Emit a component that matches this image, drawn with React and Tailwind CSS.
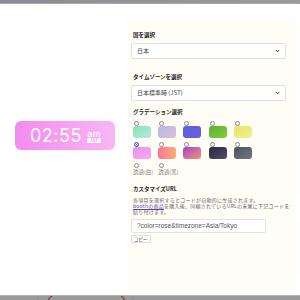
import React, { useState } from 'react';

const gradients = [
  { id: 'mint', cls: 'bg-gradient-to-br from-[#84e2b6] to-[#b6e9de]' },
  { id: 'lavender', cls: 'bg-gradient-to-br from-[#b4b8e6] to-[#dbbfdb]' },
  { id: 'indigo', cls: 'bg-gradient-to-br from-[#5263de] to-[#6c5ed6]' },
  { id: 'green', cls: 'bg-gradient-to-br from-[#58b231] to-[#84cd3e]' },
  { id: 'lemon', cls: 'bg-gradient-to-br from-[#e2e664] to-[#f0f190]' },
  { id: 'rose', cls: 'bg-gradient-to-br from-[#ee8cf0] to-[#f8aaf0]' },
  { id: 'peach', cls: 'bg-gradient-to-r from-[#f8739a] to-[#fdab70]' },
  { id: 'grape', cls: 'bg-gradient-to-br from-[#a63cc6] to-[#f59070]' },
  { id: 'night', cls: 'bg-gradient-to-br from-[#2c2a42] to-[#4f4d68]' },
  { id: 'slate', cls: 'bg-gradient-to-br from-[#4c555e] to-[#6d787e]' },
];

const Radio = ({ checked }) => (
  <span
    className={
      checked
        ? 'block w-[5px] h-[5px] rounded-full bg-[#1a73e8] border border-[#1a73e8] shadow-[inset_0_0_0_1px_#fff]'
        : 'block w-[5px] h-[5px] rounded-full border border-[#8a8a8a] bg-white'
    }
  />
);

const Chevron = () => (
  <svg width="5" height="4" viewBox="0 0 5 4" className="shrink-0">
    <path d="M0.8 1 L2.5 2.8 L4.2 1" fill="none" stroke="#333" strokeWidth="0.9" />
  </svg>
);

const Select = ({ value }) => (
  <div className="flex items-center justify-between w-[155px] h-[16px] px-[5px] bg-white border border-[#e2e2e2] rounded-[2px] shadow-[0_0_1px_rgba(0,0,0,0.08)]">
    <span className="text-[6px] text-[#444] leading-none">{value}</span>
    <Chevron />
  </div>
);

const App = () => {
  const [selected, setSelected] = useState('rose');

  return (
    <div className="w-[300px] h-[300px] overflow-hidden bg-white font-['Noto_Sans_CJK_JP','Noto_Sans',sans-serif]">
      {/* top bar */}
      <div className="h-[4px] bg-gradient-to-r from-[#8c8c95] to-[#9b9b9b] border-b border-[#a8a8a8]" />

      <div className="flex h-[291px]">
        {/* clock preview */}
        <div className="w-[128px] pl-[15px] pt-[117px]">
          <div className="flex items-center w-[100px] h-[29px] pl-[15px] gap-[5px] rounded-[6px] bg-gradient-to-r from-[#f48aef] to-[#f7b6f4]">
            <span className="text-[18px] leading-none font-normal text-white tracking-[0.5px] font-['Inter',sans-serif]">
              02:55
            </span>
            <div className="flex flex-col items-center gap-[1px] pt-[1px]">
              <span className="text-[9px] leading-[7px] font-medium text-white font-['Inter',sans-serif]">am</span>
              <span className="w-[14px] text-center rounded-[1px] bg-white text-[4.5px] leading-[5px] font-bold text-[#f49cf0] font-['Inter',sans-serif]">
                JST
              </span>
            </div>
          </div>
        </div>

        {/* settings panel */}
        <div className="w-[169px] h-[270px] mt-[16px] bg-[#fffdf6] pl-[3px] pt-[12px]">
          <p className="text-[5.5px] leading-[6px] font-bold text-[#222] pl-[2px]">国を選択</p>
          <div className="mt-[5px]">
            <Select value="日本" />
          </div>

          <p className="mt-[15px] text-[5.5px] leading-[6px] font-bold text-[#222] pl-[2px]">タイムゾーンを選択</p>
          <div className="mt-[5px]">
            <Select value="日本標準時 (JST)" />
          </div>

          <p className="mt-[8px] text-[5.5px] leading-[6px] font-bold text-[#222] pl-[2px]">グラデーション選択</p>

          <div className="mt-[6px] pl-[2px] grid grid-cols-5 w-[128px] gap-y-[4px]">
            {gradients.map((g) => (
              <button
                key={g.id}
                onClick={() => setSelected(g.id)}
                className="flex flex-col items-start"
              >
                <span className="pl-[1px]">
                  <Radio checked={selected === g.id} />
                </span>
                <span className={`block w-[18px] h-[12px] rounded-[3px] ${g.cls}`} />
              </button>
            ))}
            {['透過(白)', '透過(黒)'].map((t) => (
              <div key={t} className="flex flex-col items-start">
                <span className="pl-[1px]">
                  <Radio checked={false} />
                </span>
                <span className="text-[5.5px] leading-[8px] text-[#777] whitespace-nowrap">{t}</span>
              </div>
            ))}
          </div>

          <p className="mt-[10px] text-[5.5px] leading-[6px] font-bold text-[#222] pl-[2px]">カスタマイズURL</p>
          <p className="mt-[5px] pl-[2px] text-[5px] leading-[6px] tracking-[0.25px] text-[#666] whitespace-nowrap">
            各項目を選択するとコードが自動的に生成されます。
            <br />
            <span className="text-[#5b3fa0] underline">boothの商品</span>を購入後、同梱されているURLの末尾に下記コードを
            <br />
            貼り付けます。
          </p>

          <div className="mt-[4px] flex items-center w-[135px] h-[14px] pl-[5px] bg-white border border-[#e2e2e2] rounded-[2px]">
            <span className="text-[6.5px] leading-none text-[#555] font-['Liberation_Sans',sans-serif]">
              ?color=rose&amp;timezone=Asia/Tokyo
            </span>
          </div>
          <button className="mt-[2px] flex items-center h-[8px] px-[2px] bg-white border border-[#dcdcdc] rounded-[1px] text-[4.5px] leading-none text-[#555]">
            コピー
          </button>
        </div>
      </div>

      {/* bottom bar */}
      <div className="h-[5px] bg-[#9a9a9a] border-t border-[#b5b5b5]">
        <svg width="300" height="5" viewBox="0 0 300 5" className="block">
          <line x1="38" y1="0" x2="38" y2="5" stroke="#8a8a8a" strokeWidth="0.6" />
          <line x1="133" y1="0" x2="133" y2="5" stroke="#8a8a8a" strokeWidth="0.6" />
          <path d="M48 5 Q49 1 52 0" fill="none" stroke="#5a2a12" strokeWidth="1" />
          <path d="M125 5 Q124 1 121 0" fill="none" stroke="#5a2a12" strokeWidth="1" />
        </svg>
      </div>
    </div>
  );
};

export default App;
